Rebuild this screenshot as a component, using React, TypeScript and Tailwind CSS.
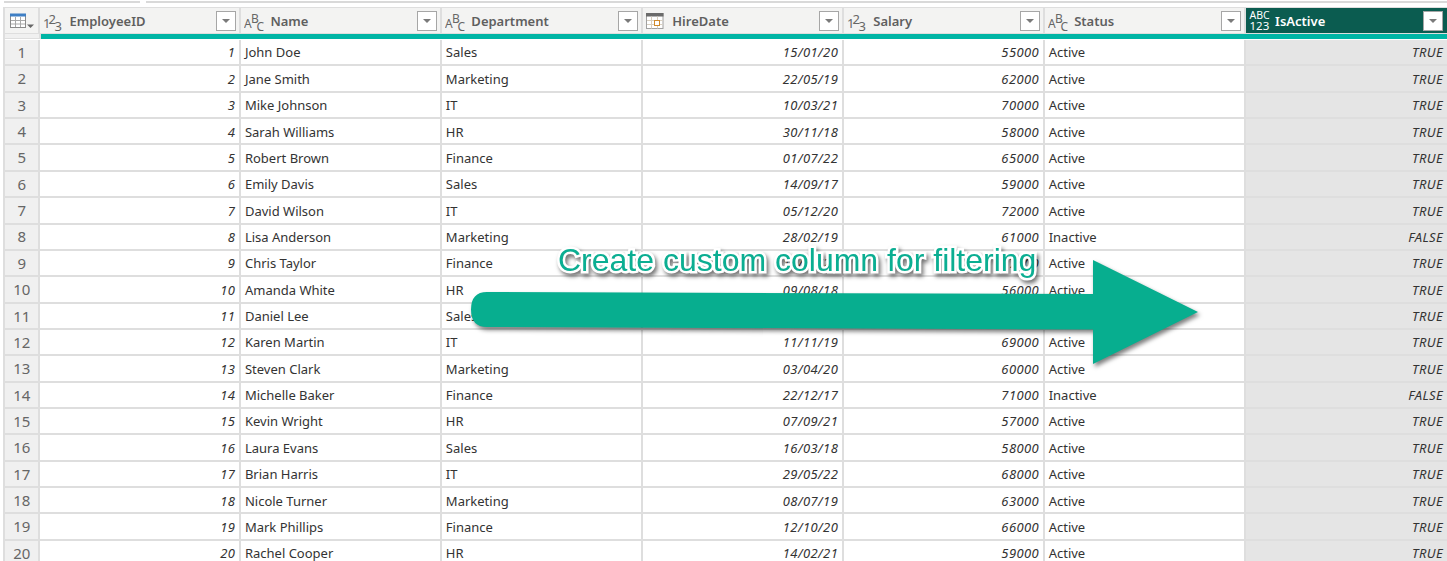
const ROWS: [string, string, string, string, string, string][] = [
  ["John Doe", "Sales", "15/01/20", "55000", "Active", "TRUE"],
  ["Jane Smith", "Marketing", "22/05/19", "62000", "Active", "TRUE"],
  ["Mike Johnson", "IT", "10/03/21", "70000", "Active", "TRUE"],
  ["Sarah Williams", "HR", "30/11/18", "58000", "Active", "TRUE"],
  ["Robert Brown", "Finance", "01/07/22", "65000", "Active", "TRUE"],
  ["Emily Davis", "Sales", "14/09/17", "59000", "Active", "TRUE"],
  ["David Wilson", "IT", "05/12/20", "72000", "Active", "TRUE"],
  ["Lisa Anderson", "Marketing", "28/02/19", "61000", "Inactive", "FALSE"],
  ["Chris Taylor", "Finance", "17/06/20", "67000", "Active", "TRUE"],
  ["Amanda White", "HR", "09/08/18", "56000", "Active", "TRUE"],
  ["Daniel Lee", "Sales", "25/04/22", "64000", "Active", "TRUE"],
  ["Karen Martin", "IT", "11/11/19", "69000", "Active", "TRUE"],
  ["Steven Clark", "Marketing", "03/04/20", "60000", "Active", "TRUE"],
  ["Michelle Baker", "Finance", "22/12/17", "71000", "Inactive", "FALSE"],
  ["Kevin Wright", "HR", "07/09/21", "57000", "Active", "TRUE"],
  ["Laura Evans", "Sales", "16/03/18", "58000", "Active", "TRUE"],
  ["Brian Harris", "IT", "29/05/22", "68000", "Active", "TRUE"],
  ["Nicole Turner", "Marketing", "08/07/19", "63000", "Active", "TRUE"],
  ["Mark Phillips", "Finance", "12/10/20", "66000", "Active", "TRUE"],
  ["Rachel Cooper", "HR", "14/02/21", "59000", "Active", "TRUE"],
]

function NumIcon() {
  return (
    <svg width="26" height="22" viewBox="0 0 26 22" className="shrink-0" fill="#666" fontFamily="'Noto Sans', sans-serif" fontSize="13">
      <text x="0" y="17.5">1</text>
      <text x="5.5" y="13.5">2</text>
      <text x="11.5" y="20.5">3</text>
    </svg>
  )
}

function TextIcon() {
  return (
    <svg width="26" height="22" viewBox="0 0 26 22" className="shrink-0" fill="#666" fontFamily="'Noto Sans', sans-serif" fontSize="12">
      <text x="0" y="17.5">A</text>
      <text x="7" y="13">B</text>
      <text x="12.5" y="20.5">C</text>
    </svg>
  )
}

function DateIcon() {
  return (
    <svg width="26" height="22" viewBox="0 0 26 22" className="shrink-0">
      <rect x="0.5" y="3.5" width="16.5" height="15" fill="#fff" stroke="#a0a0a0" />
      <rect x="0" y="3" width="17.5" height="3.5" fill="#6b6b6b" />
      <path d="M5.5 6.5v12M11.5 6.5v12M1 10.5h15.5M1 14.5h15.5" stroke="#d8cfc0" />
      <rect x="8.5" y="10.5" width="5" height="5" fill="#fff" stroke="#d08a2c" />
    </svg>
  )
}

function AnyIcon() {
  return (
    <svg width="26" height="22" viewBox="0 0 26 22" className="shrink-0" fill="#fff" fontFamily="'Noto Sans', sans-serif">
      <text x="0.5" y="9" fontSize="10.5">ABC</text>
      <text x="0.5" y="20" fontSize="11.5">123</text>
    </svg>
  )
}

function FilterButton() {
  return (
    <div className="ml-auto flex h-5 w-5 shrink-0 items-center justify-center border border-[#a6a6a6] bg-white">
      <div className="h-0 w-0 border-x-[4px] border-t-[4px] border-x-transparent border-t-[#7a7a7a]" />
    </div>
  )
}

function HeaderCell({ label, icon, active }: { label: string; icon: React.ReactNode; active?: boolean }) {
  return (
    <div className={`flex h-full items-center pl-[3px] ${active ? "w-[201px] bg-[#0b5c50] pr-1 text-white" : "w-[201px] border-r-2 border-[#dedede] pr-[3px] text-[#5f5f5f]"}`}>
      {icon}
      <span className="pt-0.5 text-[13px] font-semibold">{label}</span>
      <FilterButton />
    </div>
  )
}

function Cell({ children, right, active }: { children: React.ReactNode; right?: boolean; active?: boolean }) {
  return (
    <div className={`flex h-full w-[201px] items-center pt-0.5 ${right ? "justify-end pr-1 italic tracking-[0.4px]" : "pl-[3.5px]"} ${active ? "bg-[#e5e5e5]" : "border-r-2 border-[#dedede]"}`}>
      {children}
    </div>
  )
}

export default function App() {
  return (
    <div className="relative h-[561px] w-[1447px] overflow-hidden bg-white font-['Noto_Sans',sans-serif] text-[13px] text-[#333]">
      {/* formula bar edge */}
      <div className="flex h-[7px] gap-1.5">
        <div className="ml-1 mt-px h-[2px] w-[136px] bg-[#d9d9d9]" />
        <div className="mt-px h-[2px] flex-1 bg-[#d9d9d9]" />
      </div>

      <div className="ml-[3px] border-l-2 border-[#dedede]">
        {/* header */}
        <div className="flex h-[27px] border-y border-[#dedede] bg-[#f3f3f2]">
          <div className="flex h-full w-[35.5px] items-center border-r-2 border-[#dedede] pl-[5px]">
            <svg width="26" height="20" viewBox="0 0 26 20" className="shrink-0">
              <rect x="0.5" y="3.5" width="15" height="13" fill="#fff" stroke="#8a8a8a" />
              <rect x="0" y="2.5" width="16" height="3" fill="#3f7fc4" />
              <path d="M5.5 6v10M10.5 6v10M1 9.5h14M1 13h14" stroke="#a8a8a8" />
              <path d="M17 13.5h7l-3.5 3.5z" fill="#666" />
            </svg>
          </div>
          <HeaderCell label="EmployeeID" icon={<NumIcon />} />
          <HeaderCell label="Name" icon={<TextIcon />} />
          <HeaderCell label="Department" icon={<TextIcon />} />
          <HeaderCell label="HireDate" icon={<DateIcon />} />
          <HeaderCell label="Salary" icon={<NumIcon />} />
          <HeaderCell label="Status" icon={<TextIcon />} />
          <HeaderCell label="IsActive" icon={<AnyIcon />} active />
        </div>

        {/* quality bar */}
        <div className="flex h-[5px]">
          <div className="w-[35.5px] border-r-2 border-b border-[#dedede] bg-[#f0f0f0]" />
          <div className="flex-1 bg-[#00b5a5]" />
        </div>

        <div className="pt-px">
          {ROWS.map((r, i) => (
            <div key={i} className="flex h-[26.37px] border-b-2 border-[#dedede]">
              <div className="flex h-full w-[35.5px] items-center justify-center border-r-2 border-[#dedede] bg-[#f0f0f0] text-[15px] text-[#666]">
                {i + 1}
              </div>
              <Cell right>{i + 1}</Cell>
              <Cell>{r[0]}</Cell>
              <Cell>{r[1]}</Cell>
              <Cell right>{r[2]}</Cell>
              <Cell right>{r[3]}</Cell>
              <Cell>{r[4]}</Cell>
              <Cell right active>{r[5]}</Cell>
            </div>
          ))}
        </div>
      </div>

      {/* callout arrow */}
      <svg className="absolute left-0 top-0 drop-shadow-[2px_3px_2px_rgba(0,0,0,0.5)]" width="1447" height="561" viewBox="0 0 1447 561">
        <path d="M487 292L1093 294V260L1198 312L1093 364V329.5L487 327Q471 327 471 309.5Q471 292 487 292Z" fill="#07ae8f" />
      </svg>

      <div className="absolute left-[558px] top-[238px] whitespace-nowrap font-['Liberation_Sans',sans-serif] text-[32px] leading-[44px] text-[#0bae92] [paint-order:stroke_fill] [-webkit-text-stroke:5px_#fff] drop-shadow-[2px_3px_2px_rgba(0,0,0,0.55)]">
        Create custom column for filtering
      </div>
    </div>
  )
}
